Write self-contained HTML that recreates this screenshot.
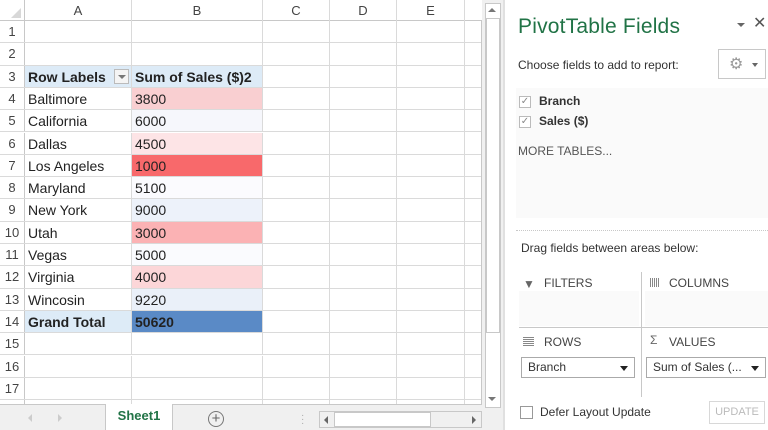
<!DOCTYPE html>
<html><head><meta charset="utf-8"><style>
*{margin:0;padding:0;box-sizing:border-box}
body{width:768px;height:430px;overflow:hidden;background:#fff;font-family:"Liberation Sans",sans-serif;position:relative;color:#222}
.a{position:absolute}
.r{position:absolute;left:0;width:482px;height:22.3px;border-bottom:1px solid #dadada;font-size:14px;line-height:22px}
.r .n{position:absolute;left:0;width:25px;height:100%;text-align:center;color:#444;font-size:13px;background:#fff;border-right:1px solid #c8c8c8}
.r .c1{position:absolute;left:25px;width:107px;height:100%;padding-left:3px;border-right:1px solid #dadada}
.r .c2{position:absolute;left:132px;width:131px;height:100%;padding-left:3px;border-right:1px solid #dadada}
.r .g{position:absolute;top:0;height:100%;border-right:1px solid #dadada}
.b{font-weight:bold}
.vl{position:absolute;top:0;width:1px;background:#dadada}
</style></head><body>
<!-- column header -->
<div class="a" style="left:0;top:0;width:482px;height:21px;border-bottom:1px solid #c8c8c8;font-size:13px;color:#444;line-height:21px">
<div class="a" style="left:0;width:25px;height:21px;border-right:1px solid #c8c8c8"><div class="a" style="right:3px;bottom:3px;width:0;height:0;border-left:10px solid transparent;border-bottom:10px solid #d8d8d8"></div></div>
<div class="a" style="left:25px;width:107px;text-align:center;border-right:1px solid #dadada;height:21px">A</div>
<div class="a" style="left:132px;width:131px;text-align:center;border-right:1px solid #dadada;height:21px">B</div>
<div class="a" style="left:263px;width:67px;text-align:center;border-right:1px solid #dadada;height:21px">C</div>
<div class="a" style="left:330px;width:67px;text-align:center;border-right:1px solid #dadada;height:21px">D</div>
<div class="a" style="left:397px;width:68px;text-align:center;border-right:1px solid #dadada;height:21px">E</div>
</div>
<div class="a" style="left:0;top:21px;width:482px;height:383px;overflow:hidden">
<div class="r" style="top:0"><div class="n">1</div><div class="c1"></div><div class="c2"></div></div>
<div class="r" style="top:22.3px"><div class="n">2</div><div class="c1"></div><div class="c2"></div></div>
<div class="r b" style="top:44.6px"><div class="n" style="font-weight:normal">3</div><div class="c1" style="background:#ddebf7">Row Labels<span class="a" style="left:89px;top:3px;width:15px;height:15px;border:1px solid #bbb;background:#f4f4f4"><span class="a" style="left:3px;top:5px;border-left:4px solid transparent;border-right:4px solid transparent;border-top:4px solid #777"></span></span></div><div class="c2" style="background:#ddebf7">Sum of Sales ($)2</div></div>
<div class="r" style="top:66.9px"><div class="n">4</div><div class="c1">Baltimore</div><div class="c2" style="background:#f9cfd1">3800</div></div>
<div class="r" style="top:89.2px"><div class="n">5</div><div class="c1">California</div><div class="c2" style="background:#f6f7fc">6000</div></div>
<div class="r" style="top:111.5px"><div class="n">6</div><div class="c1">Dallas</div><div class="c2" style="background:#fde4e6">4500</div></div>
<div class="r" style="top:133.8px"><div class="n">7</div><div class="c1">Los Angeles</div><div class="c2" style="background:#f8696b">1000</div></div>
<div class="r" style="top:156.1px"><div class="n">8</div><div class="c1">Maryland</div><div class="c2" style="background:#fbfbfe">5100</div></div>
<div class="r" style="top:178.4px"><div class="n">9</div><div class="c1">New York</div><div class="c2" style="background:#edf2fa">9000</div></div>
<div class="r" style="top:200.7px"><div class="n">10</div><div class="c1">Utah</div><div class="c2" style="background:#fbb2b4">3000</div></div>
<div class="r" style="top:223px"><div class="n">11</div><div class="c1">Vegas</div><div class="c2" style="background:#fafbfe">5000</div></div>
<div class="r" style="top:245.3px"><div class="n">12</div><div class="c1">Virginia</div><div class="c2" style="background:#fcd6d8">4000</div></div>
<div class="r" style="top:267.6px"><div class="n">13</div><div class="c1">Wincosin</div><div class="c2" style="background:#eaf0f9">9220</div></div>
<div class="r b" style="top:289.9px"><div class="n" style="font-weight:normal">14</div><div class="c1" style="background:#ddebf7">Grand Total</div><div class="c2" style="background:#5a8ac6">50620</div></div>
<div class="r" style="top:312.2px"><div class="n">15</div><div class="c1"></div><div class="c2"></div></div>
<div class="r" style="top:334.5px"><div class="n">16</div><div class="c1"></div><div class="c2"></div></div>
<div class="r" style="top:356.8px"><div class="n">17</div><div class="c1"></div><div class="c2"></div></div>
<div class="r" style="top:379.1px"><div class="n">18</div><div class="c1"></div><div class="c2"></div></div>
<div class="vl" style="left:329px;height:383px"></div>
<div class="vl" style="left:396px;height:383px"></div>
<div class="vl" style="left:464px;height:383px"></div>
<div class="vl" style="left:481px;height:383px;background:#c8c8c8"></div>
</div>
<!-- vertical scrollbar -->
<div class="a" style="left:482px;top:0;width:21px;height:430px;background:#f0f0f0"></div>
<div class="a" style="left:485px;top:3px;width:16px;height:405px;background:#fff;border:1px solid #c8c8c8"></div>
<div class="a" style="left:488px;top:8px;border-left:4px solid transparent;border-right:4px solid transparent;border-bottom:4px solid #777"></div>
<div class="a" style="left:486px;top:18px;width:14px;height:315px;border:1px solid #c8c8c8;background:#fff"></div>
<div class="a" style="left:488px;top:397px;border-left:4px solid transparent;border-right:4px solid transparent;border-top:4px solid #777"></div>
<!-- tab bar -->
<div class="a" style="left:0;top:404px;width:482px;height:26px;background:#f0f0f0;border-top:1px solid #c8c8c8"></div>
<div class="a" style="left:28px;top:414px;border-top:4px solid transparent;border-bottom:4px solid transparent;border-right:4px solid #ccc"></div>
<div class="a" style="left:58px;top:414px;border-top:4px solid transparent;border-bottom:4px solid transparent;border-left:4px solid #ccc"></div>
<div class="a" style="left:105px;top:404px;width:68px;height:26px;background:#fff;border-left:1px solid #c8c8c8;border-right:1px solid #c8c8c8;color:#217346;font-weight:bold;font-size:13px;text-align:center;line-height:24px">Sheet1</div>
<div class="a" style="left:208px;top:411px;width:16px;height:16px;border:1px solid #777;border-radius:50%;color:#666;font-size:15px;line-height:13px;text-align:center">+</div>
<div class="a" style="left:301px;top:414px;color:#aaa;font-size:10px;line-height:4px">·<br>·<br>·</div>
<div class="a" style="left:319px;top:411px;width:163px;height:17px;background:#f0f0f0;border:1px solid #c8c8c8"></div>
<div class="a" style="left:334px;top:412px;width:97px;height:15px;background:#fff;border:1px solid #c8c8c8"></div>
<div class="a" style="left:324px;top:416px;border-top:4px solid transparent;border-bottom:4px solid transparent;border-right:4px solid #666"></div>
<div class="a" style="left:472px;top:416px;border-top:4px solid transparent;border-bottom:4px solid transparent;border-left:4px solid #666"></div>
<!-- panel -->
<div class="a" style="left:503px;top:0;width:2px;height:430px;background:#e0e0e0"></div>
<div class="a" style="left:518px;top:15px;font-size:21px;color:#217346;letter-spacing:0.2px">PivotTable Fields</div>
<div class="a" style="left:737px;top:23px;border-left:4px solid transparent;border-right:4px solid transparent;border-top:4px solid #666"></div>
<div class="a" style="left:753px;top:13px;font-size:16px;color:#555">✕</div>
<div class="a" style="left:518px;top:58px;font-size:12px;color:#333">Choose fields to add to report:</div>
<div class="a" style="left:718px;top:49px;width:48px;height:30px;border:1px solid #c8c8c8;background:#fff"><span class="a" style="left:10px;top:4px;font-size:16px;color:#999">⚙</span><span class="a" style="left:33px;top:13px;border-left:3px solid transparent;border-right:3px solid transparent;border-top:4px solid #666"></span></div>
<div class="a" style="left:516px;top:88px;width:252px;height:130px;background:#fafafa"></div>
<div class="a" style="left:519px;top:96px;width:12px;height:12px;border:1px solid #bbb;background:#fff;font-size:10px;line-height:10px;color:#888;text-align:center">✓</div>
<div class="a" style="left:539px;top:94px;font-size:12px;font-weight:bold;color:#333">Branch</div>
<div class="a" style="left:519px;top:116px;width:12px;height:12px;border:1px solid #bbb;background:#fff;font-size:10px;line-height:10px;color:#888;text-align:center">✓</div>
<div class="a" style="left:539px;top:114px;font-size:12px;font-weight:bold;color:#333">Sales ($)</div>
<div class="a" style="left:518px;top:144px;font-size:12px;color:#555">MORE TABLES...</div>
<div class="a" style="left:516px;top:230px;width:252px;border-top:1px dotted #c8c8c8"></div>
<div class="a" style="left:521px;top:241px;font-size:12px;color:#333">Drag fields between areas below:</div>
<div class="a" style="left:519px;top:291px;width:120px;height:35px;background:#fafafa"></div>
<div class="a" style="left:645px;top:291px;width:123px;height:35px;background:#fafafa"></div>
<div class="a" style="left:641px;top:272px;width:1px;height:125px;background:#c8c8c8"></div>
<div class="a" style="left:519px;top:327px;width:249px;height:1px;background:#c8c8c8"></div>
<div class="a" style="left:523px;top:277px;font-size:12px;color:#666">&#9660;&#xFE0E;</div>
<div class="a" style="left:544px;top:276px;font-size:12px;color:#444">FILTERS</div>
<div class="a" style="left:650px;top:278px;width:10px;height:9px;background:repeating-linear-gradient(90deg,#888 0 1px,transparent 1px 2px)"></div>
<div class="a" style="left:669px;top:276px;font-size:12px;color:#444">COLUMNS</div>
<div class="a" style="left:523px;top:337px;width:11px;height:9px;background:repeating-linear-gradient(180deg,#888 0 1px,transparent 1px 2px)"></div>
<div class="a" style="left:544px;top:335px;font-size:12px;color:#444">ROWS</div>
<div class="a" style="left:650px;top:333px;font-size:12px;color:#666">Σ</div>
<div class="a" style="left:669px;top:335px;font-size:12px;color:#444">VALUES</div>
<div class="a" style="left:521px;top:357px;width:114px;height:21px;border:1px solid #aaa;background:#fff;font-size:12px;line-height:19px;padding-left:6px;color:#333">Branch<span class="a" style="left:98px;top:8px;border-left:4px solid transparent;border-right:4px solid transparent;border-top:5px solid #222"></span></div>
<div class="a" style="left:646px;top:357px;width:120px;height:21px;border:1px solid #aaa;background:#fff;font-size:12px;line-height:19px;padding-left:6px;color:#333">Sum of Sales (...<span class="a" style="left:104px;top:8px;border-left:4px solid transparent;border-right:4px solid transparent;border-top:5px solid #222"></span></div>
<div class="a" style="left:520px;top:406px;width:13px;height:13px;border:1px solid #999;background:#fff"></div>
<div class="a" style="left:540px;top:405px;font-size:12px;color:#333">Defer Layout Update</div>
<div class="a" style="left:709px;top:401px;width:56px;height:23px;border:1px solid #d8d8d8;font-size:11px;color:#bbb;text-align:center;line-height:21px">UPDATE</div>
</body></html>
